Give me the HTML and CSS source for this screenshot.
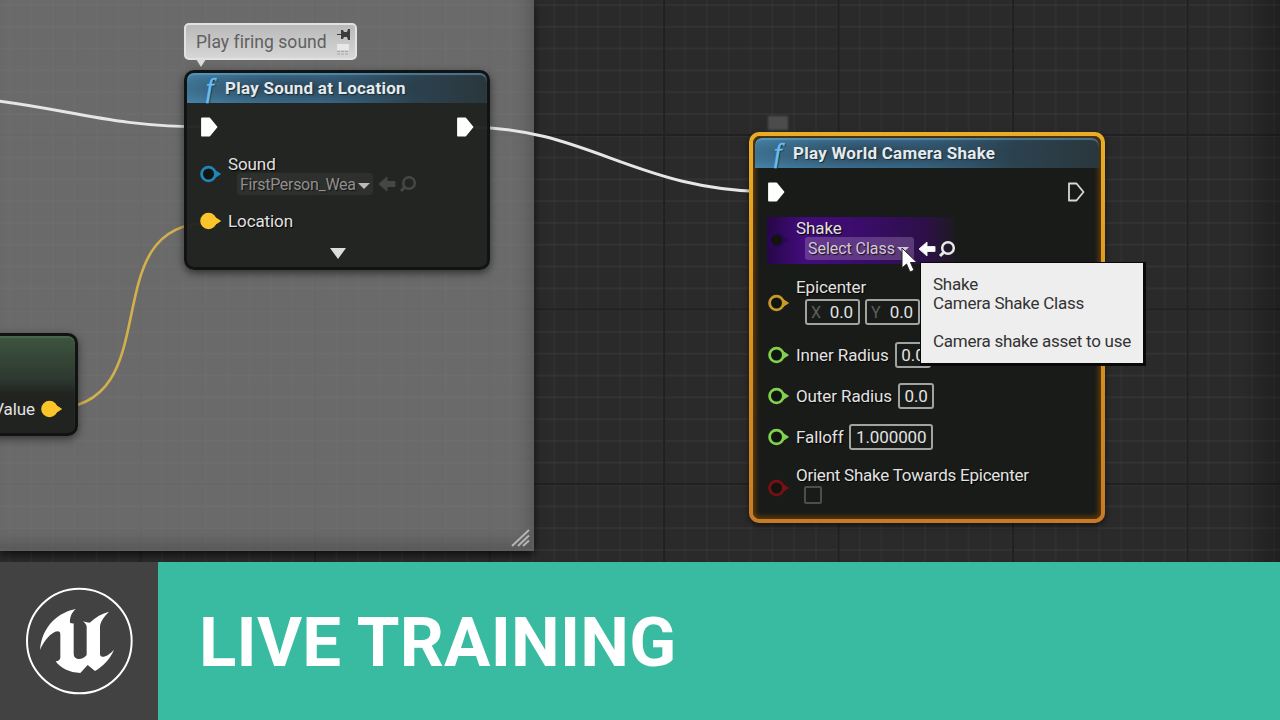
FILE: index.html
```
<!DOCTYPE html>
<html lang="en">
<head>
	<meta charset="UTF-8">
	<title>Live Training</title>
	<link rel="stylesheet" href="styles.css">
</head>
<body>
	<svg class="defs" width="0" height="0">
		<symbol id="exec" viewBox="0 0 18 20"><path d="M2 1.5h7.5l7 8.5-7 8.5H2z" stroke-width="1.8" stroke-linejoin="round"/></symbol>
		<symbol id="pin" viewBox="0 0 22 18"><circle cx="9.500" cy="9" r="6.900" stroke-width="2.800"/><path class="tip" d="M16 5.5l5.5 3.5-5.5 3.5z"/></symbol>
		<symbol id="back" viewBox="0 0 17 16"><path d="M0 8l8-7v4.500h8v5H8V15z"/></symbol>
		<symbol id="search" viewBox="0 0 18 18"><circle cx="10" cy="8" r="5.800" fill="none" stroke-width="2.500"/><path d="M6 12L2 16" fill="none" stroke-width="3"/></symbol>
	</svg>

	<div class="graph">
		<!-- comment box -->
		<div class="comment">
			<svg width="20" height="18" viewBox="0 0 20 18"><path d="M1 17L18 1M7 17L18 6.500M12 17L18 11.500" stroke="#b4b4b4" stroke-width="2"/></svg>
		</div>

		<!-- wires -->
		<svg class="wires" width="1280" height="562" fill="none">
			<path d="M-10 100C70 109 110 127 209 127" stroke="#e6e6e6" stroke-width="3"/>
			<path d="M466 127C590 127 634 192 776 192" stroke="#e6e6e6" stroke-width="3"/>
			<path d="M50 409C173 409 90 223 209 223" stroke="#d2b04c" stroke-width="2.600"/>
		</svg>

		<div class="node node-value">
			<div class="row">Value
				<svg class="pin full yellow" width="22" height="18"><use href="#pin"/></svg>
			</div>
		</div>

		<div class="bubble">
			<span>Play firing sound</span>
			<svg width="16" height="30" viewBox="0 0 16 30">
				<path d="M1 7h4V3h2l1 2h3l1-3h2v11h-2l-1-3H8l-1 2H5V8H1z" fill="#3c3c3c"/>
				<rect x="1" y="17" width="12" height="6" fill="#e8e8e8"/>
				<path d="M1 24.500h12M1 27h12" stroke="#aaa" stroke-dasharray="3 1"/>
			</svg>
		</div>

		<div class="node node-sound">
			<div class="title"><i>f</i>Play Sound at Location</div>
			<div class="row execs">
				<svg class="exec" width="18" height="20"><use href="#exec"/></svg>
				<svg class="exec" width="18" height="20"><use href="#exec"/></svg>
			</div>
			<div class="row sound">
				<svg class="pin blue" width="22" height="18"><use href="#pin"/></svg>
				<div>
					<div class="label">Sound</div>
					<div class="asset">
						<span class="select">FirstPerson_Wea<b class="caret"></b></span>
						<svg width="17" height="16"><use href="#back"/></svg>
						<svg width="18" height="18"><use href="#search"/></svg>
					</div>
				</div>
			</div>
			<div class="row location">
				<svg class="pin full yellow" width="22" height="18"><use href="#pin"/></svg>
				<div class="label">Location</div>
			</div>
			<div class="expand"></div>
		</div>

		<div class="ghost"></div>

		<div class="node node-shake">
			<div class="title"><i>f</i>Play World Camera Shake</div>
			<div class="row execs">
				<svg class="exec" width="18" height="20"><use href="#exec"/></svg>
				<svg class="exec empty" width="18" height="20"><use href="#exec"/></svg>
			</div>
			<div class="row shake">
				<svg class="pin purple" width="22" height="18"><use href="#pin"/></svg>
				<div>
					<div class="label">Shake</div>
					<div class="asset">
						<span class="select">Select Class<b class="caret"></b></span>
						<svg width="17" height="16"><use href="#back"/></svg>
						<svg width="18" height="18"><use href="#search"/></svg>
					</div>
				</div>
			</div>
			<div class="row epicenter">
				<svg class="pin gold" width="22" height="18"><use href="#pin"/></svg>
				<div>
					<div class="label">Epicenter</div>
					<div class="vector">
						<span class="field"><em>X</em>0.0</span>
						<span class="field"><em>Y</em>0.0</span>
					</div>
				</div>
			</div>
			<div class="row value">
				<svg class="pin green" width="22" height="18"><use href="#pin"/></svg>
				<div class="label">Inner Radius</div>
				<span class="field">0.0</span>
			</div>
			<div class="row value">
				<svg class="pin green" width="22" height="18"><use href="#pin"/></svg>
				<div class="label">Outer Radius</div>
				<span class="field">0.0</span>
			</div>
			<div class="row value">
				<svg class="pin green" width="22" height="18"><use href="#pin"/></svg>
				<div class="label">Falloff</div>
				<span class="field">1.000000</span>
			</div>
			<div class="row orient">
				<svg class="pin red" width="22" height="18"><use href="#pin"/></svg>
				<div>
					<div class="label">Orient Shake Towards Epicenter</div>
					<div class="check"></div>
				</div>
			</div>
		</div>

		<div class="tooltip">
			<p>Shake</p>
			<p>Camera Shake Class</p>
			<p class="desc">Camera shake asset to use</p>
		</div>

		<svg class="cursor" width="18" height="28" viewBox="0 0 18 28"><path d="M1 1v20l4.500-4 3.500 8 4-1.800-3.500-7.700H16z" fill="#fff" stroke="#222" stroke-width="1"/></svg>
	</div>

	<div class="banner">
		<div class="logo">
			<svg width="158" height="158" viewBox="0 6 474 474">
				<circle cx="238" cy="243" r="157" fill="none" stroke="#fff" stroke-width="6"/>
				<path fill="#fff" d="M228 147C178 156 126 196 120 270C132 243 153 216 173 214Q181 214 181 224V293Q180 302 167 304C181 324 208 338 241 339L263 315L285 333C309 318 330 298 342 269C330 282 318 290 308 290Q300 290 300 281V198C303 181 314 168 327 155C306 160 287 171 269 188Q260 188 249 184Q260 193 260 201V285C253 293 244 298 235 297Q221 296 221 280V190Q216 191 210 188C209 174 214 157 228 147Z"/>
			</svg>
		</div>
		<h1>LIVE TRAINING</h1>
	</div>
</body>
</html>
```
FILE: styles.css
```
*{margin: 0;padding: 0;box-sizing: border-box;}
body{width: 1280px;height: 720px;overflow: hidden;font-family: Roboto, sans-serif;font-size: 17px;letter-spacing: -.1px;color: #e2e2e2;background: #2a2a2a;}
svg{display: block;flex: none;}
.defs{position: absolute;}

/* graph canvas */
.graph{position: relative;height: 562px;overflow: hidden;white-space: nowrap;background-color: #2a2a2a;
	background-image:
		linear-gradient(90deg, #212121 2px, transparent 2px),
		linear-gradient(#212121 2px, transparent 2px),
		linear-gradient(90deg, rgba(255,255,255,.025) 2px, transparent 2px),
		linear-gradient(rgba(255,255,255,.035) 2px, transparent 2px);
	background-size: 174.500px 174.500px, 174.500px 174.500px, 21.812px 21.812px, 21.812px 21.812px;
	background-position: 139.500px 0, 0 134px, 8.500px 0, 0 4px;
}
.graph:after{content: "";position: absolute;top: 0;right: 0;width: 40px;height: 100%;background: linear-gradient(90deg, transparent, rgba(0,0,0,.25));}
.comment{position: absolute;left: 0;top: 0;width: 534px;height: 551px;display: flex;align-items: flex-end;justify-content: flex-end;padding: 0 1px 2px 0;border: solid rgba(90,90,90,.8);border-width: 0 2px 2px 0;background: rgba(131,131,131,.72);box-shadow: 0 4px 8px rgba(0,0,0,.6), inset -8px -12px 16px -6px rgba(50,50,50,.35);}
.wires{position: absolute;left: 0;top: 0;}

/* nodes */
.node{position: absolute;border: 3px solid #111312;border-radius: 10px;background: rgba(33,35,33,.97);box-shadow: 0 3px 8px rgba(0,0,0,.55);}
.node-value{left: -60px;top: 333px;width: 138px;height: 103px;padding: 63px 13px 0 0;background: linear-gradient(#3d553f, #2d382f 45%, #202320 60%);box-shadow: 0 3px 8px rgba(0,0,0,.5), inset 0 2px 1px #48664c;}
.node-value .row{justify-content: flex-end;gap: 5px;height: 20px;}
.node-sound{left: 184px;top: 70px;width: 306px;height: 200px;}
.node-shake{z-index: 0;left: 749px;top: 132px;width: 356px;height: 391px;padding: 6px;border: 0;background: linear-gradient(#e9ad27, #dc951d 45%, #c97a25);box-shadow: 0 3px 6px rgba(0,0,0,.5);}
.node-shake:before{content: "";position: absolute;z-index: -1;left: 4px;top: 4px;right: 4px;bottom: 4px;border-radius: 7px;background: #191b19;box-shadow: inset 0 0 4px 3px #573709;}

.title{display: flex;align-items: center;height: 30px;padding: 0 0 1px 15px;border-radius: 7px 7px 0 0;font-size: 17px;font-weight: bold;letter-spacing: .25px;color: #e3ebef;background: radial-gradient(ellipse 50% 70% at 35% 50%, rgba(35,50,62,.75), transparent), linear-gradient(90deg, #4684aa, #3d7498 45%, #2c4350 75%, #2a363c);box-shadow: inset 0 2px 1px rgba(100,165,205,.55);text-shadow: 1px 1px 1px #1a2b35;}
.title i{width: 23px;padding-left: 4px;font: italic 27px/26px "Liberation Serif", serif;color: #65bff5;-webkit-text-stroke: .5px #65bff5;}
.row{display: flex;align-items: center;}
.label{line-height: 20px;text-shadow: 1px 1px 1px #000;}
.exec{fill: #fff;stroke: #fff;}
.exec.empty{fill: none;stroke: #d8d8d8;}
.pin{fill: #101510;stroke: currentColor;}
.pin .tip{stroke: none;}
.pin.full{fill: currentColor;}
.blue{color: #2185b8;}
.yellow{color: #fbc42b;}
.gold{color: #c99a2b;}
.green{color: #83cf4e;}
.red{color: #7c0e14;}
.purple{color: #2a0759;}
.tip{fill: currentColor;}

.execs{justify-content: space-between;height: 48px;padding: 0 13px;}
.sound{height: 46px;padding-left: 12px;gap: 7px;}
.asset{display: flex;align-items: center;gap: 3px;height: 21px;}
.select{display: flex;align-items: center;height: 22px;margin-right: 4px;padding: 0 3px;border-radius: 3px;font-size: 16px;letter-spacing: -.3px;text-shadow: 1px 1px 1px #111;}
.caret{width: 0;height: 0;margin: 3px 0 0 2px;border: solid transparent;border-width: 6px 6px 0;border-top-color: currentColor;}
.sound .asset{padding-left: 9px;fill: #454745;stroke: #454745;}
.sound .select{margin-right: 3px;color: #909090;background: #2e302e;}
.sound .caret{border-top-color: #bbb;}
.location{height: 48px;padding-left: 12px;gap: 7px;}
.expand{width: 16px;margin: 3px 0 0 143px;border: solid transparent;border-width: 11px 8px 0;border-top-color: #ddd;}

.node-shake .execs{padding: 0 14px 0 12px;}
.shake{width: 188px;height: 47px;margin: 1px 0 0 12px;padding-bottom: 3px;gap: 7px;background: linear-gradient(90deg, #260748, #430c7c 20%, #3b0c6b 50%, #2c1047 85%, #1d1a20);}
.shake .pin{margin-top: 2px;}
.shake .asset{padding-left: 9px;gap: 2px;fill: #fff;stroke: #e8e8e8;}
.shake .label{line-height: 19px;}
.shake .select{flex: none;width: 109px;height: 23px;margin-right: 3px;letter-spacing: -.05px;color: #d5c8dc;background: rgba(150,120,175,.42);}
.epicenter{height: 70px;padding: 4px 0 0 12px;gap: 7px;}
.epicenter .pin{margin-top: 3px;}
.vector{display: flex;gap: 5px;padding-left: 9px;margin-top: 2px;}
.field{display: flex;justify-content: space-between;align-items: center;height: 26px;padding: 0 4px;border: 2px solid #a0a3a0;border-radius: 3px;letter-spacing: -.1px;}
.vector .field{width: 55px;padding-right: 5px;}
.value .field{margin-left: -1px;padding: 0 4.500px;}
.field em{font-style: normal;font-size: 16px;color: #5d605d;}
.value{height: 41px;padding-left: 12px;gap: 7px;}
.orient{height: 55px;padding-left: 12px;gap: 7px;}
.orient .pin{margin-top: 6px;}
.orient .label{letter-spacing: -.24px;}
.check{width: 18px;height: 18px;margin: 1px 0 0 8px;border: 2px solid #4b4e4b;border-radius: 2px;}

/* things lying over the nodes */
.bubble{position: absolute;left: 184px;top: 23px;width: 173px;height: 37px;display: flex;align-items: center;justify-content: space-between;padding: 0 3px 0 10px;border: 2px solid #e2e2e2;border-radius: 5px;color: #606060;font-size: 17.500px;letter-spacing: .05px;background: linear-gradient(#b9b9b9, #d6d6d6);}
.bubble:after{content: "";position: absolute;left: 10px;top: 34px;border: solid transparent;border-width: 8px 5px 0;border-top-color: #ddd;}
.ghost{position: absolute;left: 768px;top: 116px;width: 20px;height: 14px;background: #4c4c4c;filter: blur(1px);}
.tooltip{position: absolute;z-index: 2;left: 920px;top: 262px;width: 226px;height: 104px;padding: 12px;border: solid #090909;border-width: 1px 3px 3px 1px;font-size: 17px;line-height: 19px;letter-spacing: -.25px;color: #333;background: #eee;}
.tooltip .desc{margin-top: 19px;}
.cursor{position: absolute;z-index: 3;left: 901px;top: 247px;}

/* bottom banner */
.banner{display: flex;height: 158px;background: #38bba1;}
.logo{width: 158px;background: #424242;}
h1{padding-left: 41px;font-size: 69px;line-height: 161px;font-weight: bold;letter-spacing: .2px;color: #fff;white-space: nowrap;}
```
